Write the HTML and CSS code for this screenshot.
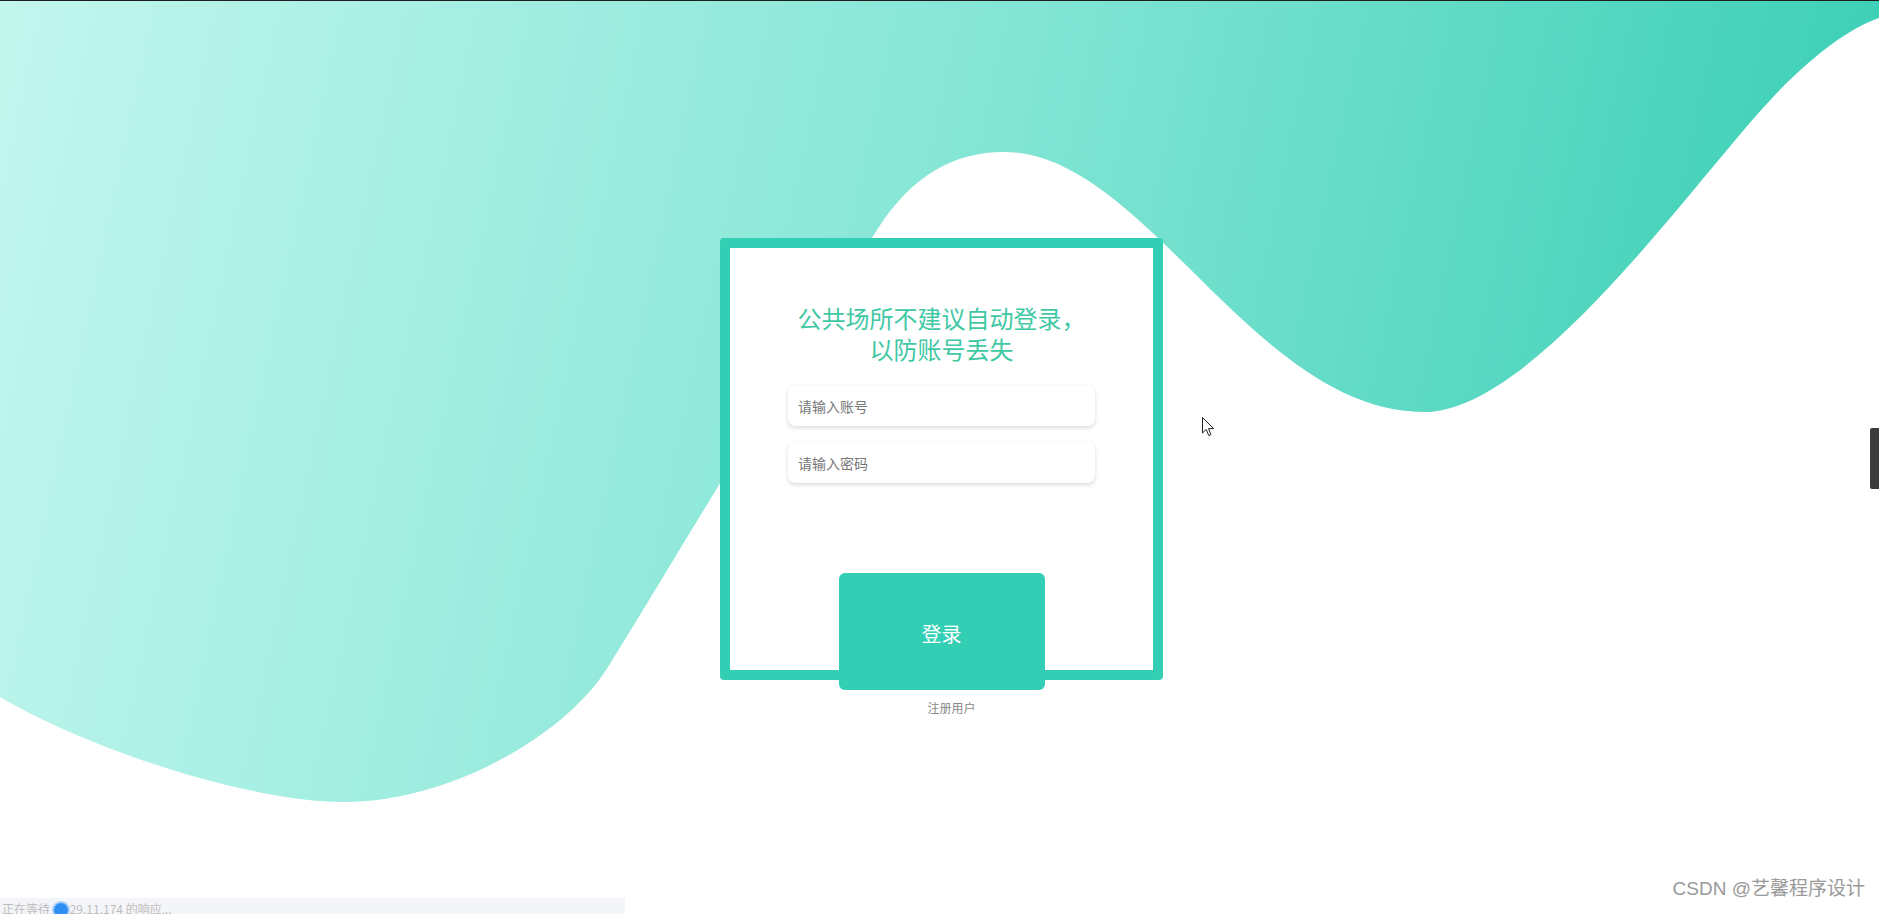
FILE: index.html
```html
<!DOCTYPE html>
<html lang="zh-CN">
<head>
<meta charset="utf-8">
<title>登录</title>
<link rel="stylesheet" href="styles.css">
</head>
<body>
<div class="topline"></div>

<!-- decorative wave behind the form -->
<svg class="wave" viewBox="0 0 1879 914" preserveAspectRatio="none" aria-hidden="true">
  <defs>
    <linearGradient id="waveFill" gradientUnits="userSpaceOnUse" x1="0" y1="0" x2="1879" y2="400">
      <stop offset="0" stop-color="#c2f6ee"/>
      <stop offset="0.5" stop-color="#86e6d6"/>
      <stop offset="1" stop-color="#38ceb4"/>
    </linearGradient>
  </defs>
  <path fill="url(#waveFill)" d="M0 0 L0 697
    C90 750 250 802 344 802
    C450 802 566 735 608 667
    C698 521 787 370 877 230
    C912 175 954 152 1004 152
    C1145 152 1254 412 1424 412
    C1534 412 1694 181 1774 96
    C1814 54 1850 28 1879 18
    L1879 0 Z"/>
</svg>

<main class="page">
  <form class="login-card">
    <h1 class="login-title"><span class="title-line">公共场所不建议自动登录，</span><span class="title-line">以防账号丢失</span></h1>
    <input class="field" type="text" placeholder="请输入账号">
    <input class="field" type="password" placeholder="请输入密码">
    <button class="login-btn" type="button">登录</button>
  </form>
  <a class="register" href="#">注册用户</a>
</main>

<div class="side-tab"></div>

<svg class="cursor" width="13" height="20" viewBox="0 0 13 20" aria-hidden="true">
  <path d="M0.5 0.5 L0.5 16 L4.2 12.4 L6.8 18.6 L9 17.6 L6.5 11.6 L11.6 11.6 Z" fill="#fff" stroke="#222" stroke-width="1" stroke-linejoin="round"/>
</svg>

<div class="status">正在等待 <span class="status-icon"></span>29.11.174 的响应...</div>

<div class="watermark">CSDN @艺馨程序设计</div>
</body>
</html>
```

FILE: styles.css
```css
* {
  box-sizing: border-box;
}

html,
body {
  margin: 0;
  height: 100%;
}

body {
  position: relative;
  overflow: hidden;
  background: #fff;
  font-family: "Noto Sans CJK SC", "Noto Sans", sans-serif;
}

.topline {
  position: absolute;
  top: 0;
  left: 0;
  right: 0;
  height: 1px;
  background: #1e1e1e;
  z-index: 3;
}

.wave {
  position: absolute;
  top: 0;
  left: 0;
  width: 100%;
  height: 100%;
  z-index: 0;
}

.page {
  position: relative;
  z-index: 1;
  display: flex;
  flex-direction: column;
  align-items: center;
  padding-top: 238px;
  padding-left: 4px;
}

.login-card {
  width: 443px;
  height: 442px;
  margin: 0;
  border: 10px solid #33cfb5;
  border-radius: 4px;
  background: #fff;
  display: flex;
  flex-direction: column;
  align-items: center;
}

.login-card > * {
  flex-shrink: 0;
}

.login-title {
  display: flex;
  flex-direction: column;
  align-items: center;
  margin: 54px 0 21px;
  font-size: 24px;
  font-weight: 400;
  color: #3fc8a4;
  text-align: center;
}

.title-line {
  display: block;
  height: 31px;
  line-height: 31px;
}

.field {
  width: 307px;
  height: 41px;
  padding: 0 10px;
  border: none;
  border-radius: 7px;
  background: #fff;
  box-shadow: 0 2px 4px rgba(0, 0, 0, 0.14), 0 0 1px rgba(0, 0, 0, 0.06);
  font-family: "Noto Sans CJK SC", sans-serif;
  font-size: 14px;
  color: #333;
  outline: none;
}

.field + .field {
  margin-top: 16px;
}

.field::placeholder {
  color: #777;
}

.login-btn {
  margin-top: 90px;
  width: 206px;
  height: 117px;
  padding: 3px 0 0;
  border: none;
  border-radius: 6px;
  background: #32cfb5;
  color: #fff;
  font-family: "Noto Sans CJK SC", sans-serif;
  font-size: 20px;
  cursor: pointer;
}

.register {
  margin-top: 20px;
  padding-left: 20px;
  font-size: 12px;
  line-height: 16px;
  color: #888;
  text-decoration: none;
}

.side-tab {
  position: absolute;
  top: 428px;
  right: 0;
  width: 9px;
  height: 61px;
  background: #3b3b3b;
  border-radius: 2px 0 0 2px;
  z-index: 2;
}

.cursor {
  position: absolute;
  left: 1202px;
  top: 417px;
  z-index: 4;
}

.status {
  position: absolute;
  left: 0;
  bottom: 0;
  width: 625px;
  height: 16px;
  padding: 3px 0 0 2px;
  overflow: hidden;
  background: #f4f5f9;
  font-size: 12px;
  line-height: 16px;
  color: #bdbdbd;
  white-space: nowrap;
  z-index: 2;
}

.status-icon {
  display: inline-block;
  width: 14px;
  height: 14px;
  margin: 0 2px 0 1px;
  vertical-align: -3px;
  border-radius: 50%;
  background: #2f8ff5;
  box-shadow: 0 0 0 2px #a9cff7;
}

.watermark {
  position: absolute;
  right: 14px;
  bottom: 14px;
  font-family: "Liberation Sans", "Noto Sans CJK SC", sans-serif;
  font-size: 19px;
  line-height: 22px;
  color: #999;
  z-index: 2;
}
```
